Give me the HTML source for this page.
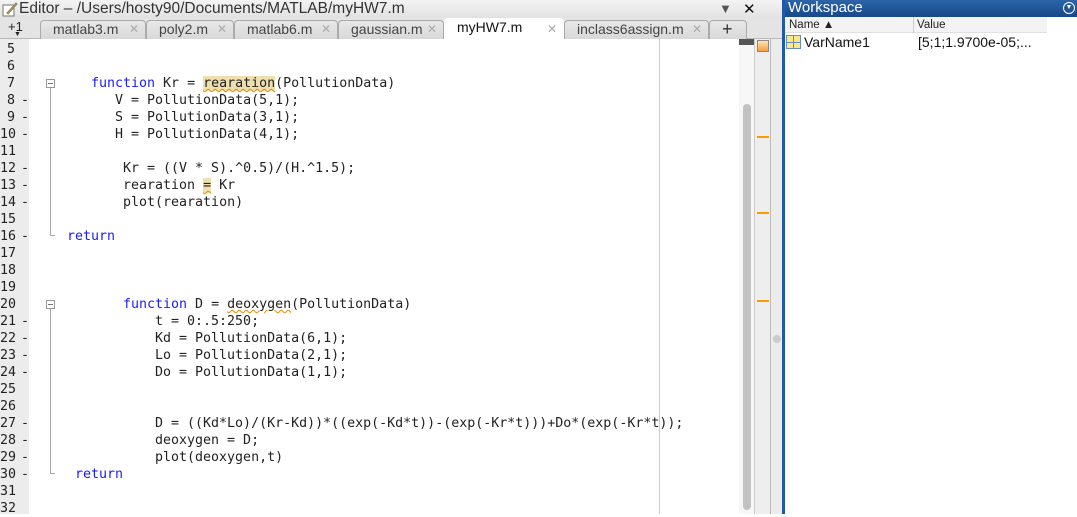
<!DOCTYPE html>
<html><head><meta charset="utf-8"><style>
*{margin:0;padding:0;box-sizing:border-box}
body{width:1077px;height:514px;overflow:hidden;background:#fff;font-family:"Liberation Sans",sans-serif;position:relative}
.abs{position:absolute}
.title{left:0;top:0;width:783px;height:18px;background:linear-gradient(#f4f4f4,#e2e2e2);font-size:15.5px;color:#333;line-height:18px;padding-left:19px}
.tabbar{left:0;top:18px;width:783px;height:21px;background:#e4e4e4;border-bottom:1px solid #b8b8b8}
.tab{position:absolute;top:2px;height:19px;border:1px solid #aaa;border-bottom:none;border-radius:4px 4px 0 0;background:linear-gradient(#e8e8e8,#d8d8d8);font-size:14px;color:#444;line-height:17px;padding-left:12px}
.tab .x{position:absolute;right:6px;top:0;color:#aaa;font-size:12px}
.tab.act{background:#fff;border-color:#fff;color:#111;top:0;height:21px}
.gut{left:0;top:39px;width:29px;height:475px;background:#ececec}
.ln{position:absolute;font-family:"DejaVu Sans Mono","Liberation Mono",monospace;font-size:13.3px;line-height:17px;white-space:pre;color:#222}
.num{width:15px;text-align:right;left:0}
.k{color:#1a1aff}
.hl{background:#f0dfae;text-decoration:underline wavy #e98a00;text-decoration-thickness:1px}
.ul{text-decoration:underline wavy #e98a00;text-decoration-thickness:1px}
</style></head><body>
<div class="abs title">Editor – /Users/hosty90/Documents/MATLAB/myHW7.m</div>
<svg class="abs" style="left:2px;top:2px" width="16" height="15"><rect x="1" y="3" width="11" height="11" fill="#fff" stroke="#777"/><path d="M5 11 L14 1 L15 2 L6 12 Z" fill="#e9a030" stroke="#885"/></svg>
<div class="abs" style="left:719px;top:1px;font-size:13px;color:#555">&#9660;</div>
<div class="abs" style="left:743px;top:0px;font-size:15px;color:#111">✕</div>
<div class="abs tabbar"></div>
<div class="abs" style="left:8px;top:19px;font-size:13px;color:#222">+1</div>
<div class="abs" style="left:14px;top:31px;font-size:7px;color:#222">&#9660;</div>
<div class="tab" style="left:40px;top:20px;width:106px">matlab3.m<span class="x">✕</span></div>
<div class="tab" style="left:146px;top:20px;width:88px">poly2.m<span class="x">✕</span></div>
<div class="tab" style="left:234px;top:20px;width:104px">matlab6.m<span class="x">✕</span></div>
<div class="tab" style="left:338px;top:20px;width:106px">gaussian.m<span class="x">✕</span></div>
<div class="tab act" style="left:444px;top:18px;width:120px">myHW7.m<span class="x" style="top:2px">✕</span></div>
<div class="tab" style="left:564px;top:20px;width:145px">inclass6assign.m<span class="x">✕</span></div>
<div class="tab" style="left:709px;top:20px;width:38px;font-size:18px;padding-left:12px;color:#333">+</div>

<div class="abs gut"></div>
<div class="abs" style="left:659px;top:39px;width:1px;height:475px;background:#ccc"></div>
<div class="abs" style="left:739px;top:39px;width:16px;height:475px;background:#f7f7f7;border-right:1px solid #ccc"></div>
<div class="abs" style="left:739px;top:39px;width:15px;height:6px;background:#555"></div>
<div class="abs" style="left:743px;top:104px;width:8px;height:406px;background:#c2c2c2;border-radius:4px"></div>
<div class="abs" style="left:755px;top:39px;width:16px;height:475px;background:#eee;border-right:1px solid #bbb"></div>
<div class="abs" style="left:757px;top:40px;width:12px;height:12px;background:linear-gradient(#fde2b0,#f5a040);border:1px solid #888"></div>
<div class="abs" style="left:757px;top:136px;width:12px;height:2px;background:#f90"></div>
<div class="abs" style="left:757px;top:212px;width:12px;height:2px;background:#f90"></div>
<div class="abs" style="left:757px;top:300px;width:12px;height:2px;background:#f90"></div>
<div class="abs" style="left:771px;top:39px;width:11px;height:475px;background:#ececec"></div>
<div class="abs" style="left:773px;top:335px;width:8px;height:8px;border-radius:50%;background:#ccc"></div>
<div class="abs" style="left:782px;top:0;width:3px;height:514px;background:#1f5aa8"></div>

<div class="abs" style="left:46px;top:79px;width:9px;height:9px;border:1px solid #999;background:#fff"></div>
<div class="abs" style="left:48px;top:83px;width:5px;height:1px;background:#777"></div>
<div class="abs" style="left:50px;top:88px;width:1px;height:148px;background:#aaa"></div>
<div class="abs" style="left:50px;top:235px;width:5px;height:1px;background:#aaa"></div>
<div class="abs" style="left:46px;top:300px;width:9px;height:9px;border:1px solid #999;background:#fff"></div>
<div class="abs" style="left:48px;top:304px;width:5px;height:1px;background:#777"></div>
<div class="abs" style="left:50px;top:309px;width:1px;height:165px;background:#aaa"></div>
<div class="abs" style="left:50px;top:473px;width:5px;height:1px;background:#aaa"></div>

<div id="code"></div>
<script>
var L={7:[91,'<span class="k">function</span> Kr = <span class="hl">rearation</span>(PollutionData)'],
8:[115,'V = PollutionData(5,1);'],9:[115,'S = PollutionData(3,1);'],10:[115,'H = PollutionData(4,1);'],
12:[123,'Kr = ((V * S).^0.5)/(H.^1.5);'],13:[123,'rearation <span class="hl">=</span> Kr'],14:[123,'plot(rearation)'],
16:[67,'<span class="k">return</span>'],
20:[123,'<span class="k">function</span> D = <span class="ul">deoxygen</span>(PollutionData)'],
21:[155,'t = 0:.5:250;'],22:[155,'Kd = PollutionData(6,1);'],23:[155,'Lo = PollutionData(2,1);'],24:[155,'Do = PollutionData(1,1);'],
27:[155,'D = ((Kd*Lo)/(Kr-Kd))*((exp(-Kd*t))-(exp(-Kr*t)))+Do*(exp(-Kr*t));'],
28:[155,'deoxygen = D;'],29:[155,'plot(deoxygen,t)'],30:[75,'<span class="k">return</span>']};
var dash=[8,9,10,12,13,14,16,21,22,23,24,27,28,29,30];
var h='';
for(var n=5;n<=32;n++){var y=41+(n-5)*17;
h+='<div class="ln num" style="top:'+y+'px">'+n+'</div>';
if(dash.indexOf(n)>=0)h+='<div class="ln" style="left:21px;top:'+y+'px">-</div>';
if(L[n])h+='<div class="ln" style="left:'+L[n][0]+'px;top:'+y+'px">'+L[n][1]+'</div>';}
document.getElementById('code').innerHTML=h;
</script>

<div class="abs" style="left:785px;top:0;width:292px;height:17px;background:linear-gradient(#2c64a8,#17488a);color:#fff;font-size:15px;line-height:16px;padding-left:3px">Workspace</div>
<div class="abs" style="left:1063px;top:2px;width:12px;height:12px;border-radius:50%;border:1.5px solid #fff;color:#fff;font-size:7px;line-height:10px;text-align:center">&#9660;</div>
<div class="abs" style="left:785px;top:17px;width:262px;height:16px;background:#f3f3f3;border-bottom:1px solid #e0e0e0;font-size:11.5px;color:#222;line-height:16px"><span style="padding-left:4px">Name ▲</span><span style="position:absolute;left:128px;border-left:1px solid #ccc;padding-left:3px">Value</span></div>
<div class="abs" style="left:786px;top:35px;width:15px;height:14px;border:1px solid #6b8cc0;background:#fbe88a"></div>
<div class="abs" style="left:793px;top:35px;width:1px;height:14px;background:#6b8cc0"></div>
<div class="abs" style="left:786px;top:42px;width:15px;height:1px;background:#6b8cc0"></div>
<div class="abs" style="left:804px;top:34px;font-size:14px;color:#111">VarName1</div>
<div class="abs" style="left:918px;top:34px;font-size:14px;color:#111">[5;1;1.9700e-05;...</div>
</body></html>
